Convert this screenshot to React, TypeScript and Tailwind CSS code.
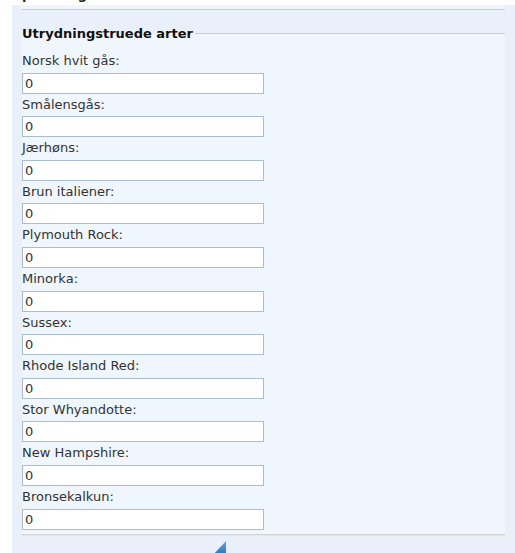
import React from "react";

const rows = [
  "Norsk hvit gås:",
  "Smålensgås:",
  "Jærhøns:",
  "Brun italiener:",
  "Plymouth Rock:",
  "Minorka:",
  "Sussex:",
  "Rhode Island Red:",
  "Stor Whyandotte:",
  "New Hampshire:",
  "Bronsekalkun:",
];

export default function App() {
  return (
    <div className="w-[515px] h-[553px] overflow-hidden bg-white font-['DejaVu_Sans',sans-serif]">
      <div className="h-[5px] overflow-hidden bg-white pl-[22px]">
        <div className="-mt-[13px] text-[13px] leading-[16px] font-bold text-[#222]">pr. kategori</div>
      </div>
      <div className="ml-[12px] bg-[#e9f0fa] px-[10px] h-[560px]">
        <div className="h-[5px] box-border bg-[#f1f6fd] border-b border-[#c9cdd3]" />
        <fieldset className="mt-[15px] m-0 p-0 border-0 border-t border-b border-t-[#c9cdd3] border-b-[#d4d4d4] bg-[#f0f6fd] shadow-[0_1px_0_#e2e5ea] min-w-0">
          <legend className="p-0 pr-[2px] text-[13px] leading-[17px] font-bold text-[#111]">Utrydningstruede arter</legend>
          <div className="pt-[8px] pb-[4px] flex flex-col">
            {rows.map((r) => (
              <div key={r} className="flex flex-col">
                <label className="h-[22.6px] leading-[22.6px] text-[13px] text-[#333] whitespace-nowrap">{r}</label>
                <input
                  type="text"
                  defaultValue="0"
                  className="w-[242px] h-[21px] box-border border border-[#a9bdd2] bg-white px-[2px] text-[13px] leading-[19px] text-[#333] font-['DejaVu_Sans',sans-serif] outline-none"
                />
              </div>
            ))}
          </div>
        </fieldset>
        <div className="pt-[6px] pl-[191px]">
          <svg width="14" height="14" viewBox="0 0 14 14">
            <defs>
              <linearGradient id="tg" x1="0" y1="0" x2="0" y2="1">
                <stop offset="0" stopColor="#5ea6e8" />
                <stop offset="1" stopColor="#2b72bd" />
              </linearGradient>
            </defs>
            <polygon points="13,0 13,14 0,14" fill="url(#tg)" />
          </svg>
        </div>
      </div>
    </div>
  );
}
